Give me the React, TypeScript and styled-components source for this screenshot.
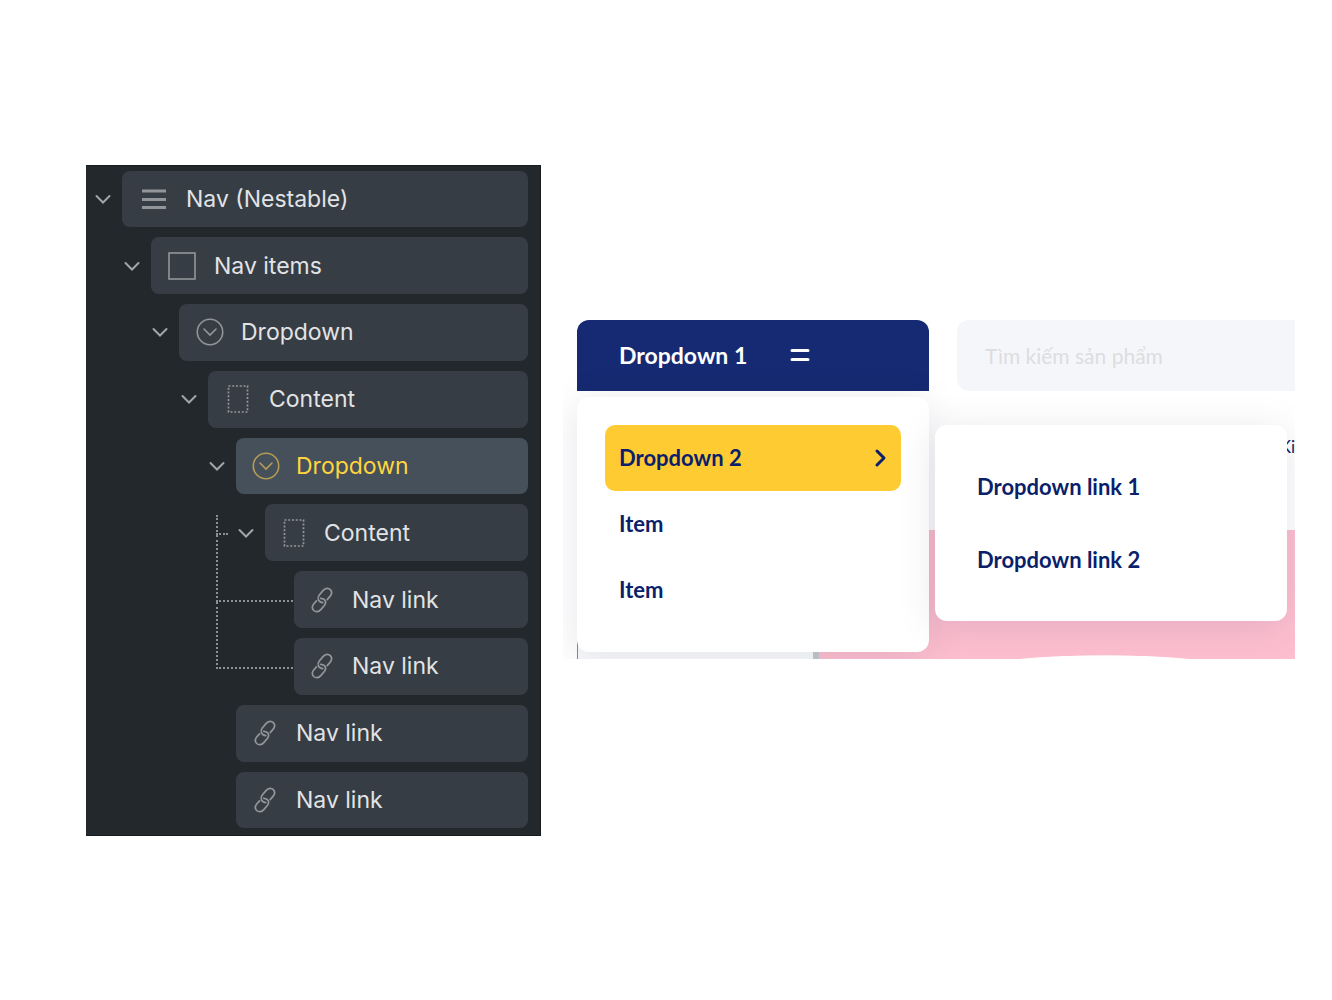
import React from "react";
import styled, { createGlobalStyle } from "styled-components";

const GlobalStyle = createGlobalStyle`
  *, *::before, *::after { box-sizing: border-box; }
  body { margin: 0; background: #fff; }
  button, input { font: inherit; color: inherit; }
`;

const Page = styled.main`
  min-height: 100vh;
  display: flex;
  align-items: center;
  padding: 0 37px 0 86px;
`;

const Columns = styled.div`
  flex: 1;
  display: grid;
  grid-template-columns: minmax(0, 455fr) minmax(0, 732fr);
  column-gap: 22px;
  align-items: start;
`;

/* Structure panel */

const Tree = styled.ul`
  list-style: none;
  margin: 0;
  min-height: 671px;
  padding: 5px 12px 6px 0;
  display: grid;
  grid-auto-rows: 1fr;
  row-gap: 10px;
  background: #23282c;
  border: 1px solid #171c21;
  border-left: 0;
  font-family: Inter, "Liberation Sans", sans-serif;
  font-size: 23px;
`;

const Row = styled.li<{ $depth: number }>`
  position: relative;
  display: grid;
  grid-template-columns: 34px 1fr;
  column-gap: 2px;
  padding-left: ${(p) => Math.round((p.$depth * 143) / 5)}px;
`;

const Toggle = styled.button`
  border: 0;
  padding: 0;
  background: none;
  color: #a3a6a9;
  display: grid;
  place-items: center;
  cursor: pointer;
`;

const Item = styled.button<{ $depth: number; $active?: boolean }>`
  grid-column: 2;
  display: flex;
  align-items: center;
  gap: ${(p) => 18 - Math.floor(p.$depth / 2)}px;
  border: 0;
  border-radius: 8px;
  padding: 0 0 0 ${(p) => 18 - Math.ceil(p.$depth / 2)}px;
  text-align: left;
  cursor: pointer;
  background: ${(p) => (p.$active ? "#46505a" : "#363d44")};
  color: ${(p) => (p.$active ? "#ffd53f" : "#e2e3e5")};
`;

const IconBox = styled.span<{ $active?: boolean }>`
  display: flex;
  flex: none;
  color: ${(p) => (p.$active ? "#b39c53" : "#92969a")};
`;

const Branch = styled.span<{ $short?: boolean }>`
  position: absolute;
  left: 130px;
  bottom: calc(50% - 2px);
  width: ${(p) => (p.$short ? 12 : 77)}px;
  height: ${(p) => (p.$short ? 20 : 67)}px;
  border: dotted #8d9194;
  border-width: 0 0 2px 2px;
`;

type Kind = "menu" | "box" | "dropdown" | "content" | "link";

const Icon = ({ kind }: { kind: Kind }) => (
  <svg width="28" height="28" viewBox="0 0 28 28" fill="none" stroke="currentColor" aria-hidden="true">
    {kind === "menu" && <path d="M2 6h24M2 14.500h24M2 22.500h24" strokeWidth="3" />}
    {kind === "box" && <rect x="1" y="1" width="26" height="26" strokeWidth="1.600" />}
    {kind === "dropdown" && (
      <>
        <circle cx="14" cy="14" r="12.700" strokeWidth="1.600" />
        <path d="M8 11l6 6 6-6" strokeWidth="1.600" strokeLinecap="round" />
      </>
    )}
    {kind === "content" && (
      <rect x="4.500" y="1" width="19" height="26" strokeWidth="1.700" strokeDasharray="2 1.750" />
    )}
    {kind === "link" && (
      <g strokeWidth="1.700" strokeLinecap="round">
        <path d="M13.800 16.600C9.400 16.400 7.700 12.200 10.300 9L14.200 4.400C16.500 1.800 19.500 1.800 21.300 3.700C23.100 5.600 22.900 8.200 21 10.400L18.200 13.600" />
        <path d="M11.600 12.300C16 12.100 18 16 15.500 19.200L11.800 23.600C9.500 26.200 6.500 26.200 4.700 24.500C2.900 22.700 3 20 4.900 17.800L7.500 14.900" />
      </g>
    )}
  </svg>
);

const rows: { label: string; kind: Kind; depth: number; active?: boolean; branch?: "short" | "long" }[] = [
  { label: "Nav (Nestable)", kind: "menu", depth: 0 },
  { label: "Nav items", kind: "box", depth: 1 },
  { label: "Dropdown", kind: "dropdown", depth: 2 },
  { label: "Content", kind: "content", depth: 3 },
  { label: "Dropdown", kind: "dropdown", depth: 4, active: true },
  { label: "Content", kind: "content", depth: 5, branch: "short" },
  { label: "Nav link", kind: "link", depth: 6, branch: "long" },
  { label: "Nav link", kind: "link", depth: 6, branch: "long" },
  { label: "Nav link", kind: "link", depth: 4 },
  { label: "Nav link", kind: "link", depth: 4 },
];

/* Site preview */

const Preview = styled.section`
  margin-top: 155px;
  overflow: hidden;
  color: #0b1f6b;
  font-family: Lato, "Noto Sans", sans-serif;
  font-size: 22px;
  font-weight: 700;
`;

const Header = styled.header`
  display: grid;
  grid-template-columns: 352px 1fr;
  column-gap: 28px;
  padding-left: 14px;
`;

const MenuButton = styled.button`
  height: 71px;
  display: flex;
  align-items: center;
  gap: 43px;
  padding: 0 42px;
  border: 0;
  border-radius: 12px 12px 0 0;
  background: #152a72;
  color: #fff;
  font-size: 23px;
  cursor: pointer;
`;

const Search = styled.input`
  min-width: 0;
  height: 71px;
  padding: 0 28px;
  border: 0;
  border-radius: 12px 0 0 12px;
  background: #f5f6fa;
  font-size: 21px;
  font-weight: 400;
  &::placeholder { color: #dcdddf; opacity: 1; }
`;

const Body = styled.div`
  position: relative;
`;

const TopLinks = styled.nav`
  height: 139px;
  padding-top: 44px;
  display: flex;
  justify-content: flex-end;
  font-size: 17px;
  font-weight: 400;
  line-height: 24px;
`;

const PlainLink = styled.a`
  color: inherit;
  text-decoration: none;
`;

const Hero = styled.div`
  display: grid;
  grid-template-columns: 250px 1fr;
  height: 129px;
`;

const HeroSide = styled.div`
  margin-left: 14px;
  border-left: 1px solid #a08a50;
  background: #f9fafb;
`;

const HeroImage = styled.div`
  overflow: hidden;
  border-left: 6px solid #c3c8cc;
  background: radial-gradient(ellipse 120px 12px at 60% 137px, #fff 94%, transparent 100%), #fdbfd0;
`;

const Panel = styled.ul<{ $sub?: boolean }>`
  position: absolute;
  top: ${(p) => (p.$sub ? 34 : 6)}px;
  left: ${(p) => (p.$sub ? 372 : 14)}px;
  width: 352px;
  list-style: none;
  margin: 0;
  padding: ${(p) => (p.$sub ? "25px 28px" : "28px 28px 29px")};
  display: grid;
  grid-auto-rows: ${(p) => (p.$sub ? 73 : 66)}px;
  border-radius: 12px;
  background: #fff;
  box-shadow: 0 6px 40px rgba(11, 20, 60, 0.1);
`;

const MenuLink = styled.a<{ $active?: boolean }>`
  height: 100%;
  display: flex;
  align-items: center;
  justify-content: space-between;
  padding: 0 14px;
  border-radius: 10px;
  color: inherit;
  text-decoration: none;
  background: ${(p) => (p.$active ? "#ffcb33" : "transparent")};
`;

export default function App() {
  return (
    <>
      <GlobalStyle />
      <Page>
        <Columns>
          <Tree>
            {rows.map((row, i) => (
              <Row key={i} $depth={row.depth}>
                {row.branch && <Branch $short={row.branch === "short"} />}
                {row.kind !== "link" && (
                  <Toggle aria-label={`Collapse ${row.label}`}>
                    <svg width="18" height="18" viewBox="0 0 18 18" fill="none" stroke="currentColor" strokeWidth="2" strokeLinecap="round">
                      <path d="M2.500 6l6.500 6.500L15.500 6" />
                    </svg>
                  </Toggle>
                )}
                <Item $depth={row.depth} $active={row.active}>
                  <IconBox $active={row.active}>
                    <Icon kind={row.kind} />
                  </IconBox>
                  {row.label}
                </Item>
              </Row>
            ))}
          </Tree>
          <Preview>
            <Header>
              <MenuButton>
                Dropdown 1
                <svg width="20" height="14" viewBox="0 0 20 14" stroke="currentColor" strokeWidth="3" strokeLinecap="round" aria-hidden="true">
                  <path d="M2 2.500h16M2 11.500h16" />
                </svg>
              </MenuButton>
              <Search type="search" aria-label="Tìm kiếm sản phẩm" placeholder="Tìm kiếm sản phẩm" />
            </Header>
            <Body>
              <TopLinks>
                <PlainLink href="#">Ki</PlainLink>
              </TopLinks>
              <Hero>
                <HeroSide />
                <HeroImage />
              </Hero>
              <Panel>
                <li>
                  <MenuLink href="#" $active>
                    Dropdown 2
                    <svg width="13" height="20" viewBox="0 0 13 20" fill="none" stroke="currentColor" strokeWidth="3" strokeLinecap="round" strokeLinejoin="round" aria-hidden="true">
                      <path d="M3 3l7 7-7 7" />
                    </svg>
                  </MenuLink>
                </li>
                <li><MenuLink href="#">Item</MenuLink></li>
                <li><MenuLink href="#">Item</MenuLink></li>
              </Panel>
              <Panel $sub>
                <li><MenuLink href="#">Dropdown link 1</MenuLink></li>
                <li><MenuLink href="#">Dropdown link 2</MenuLink></li>
              </Panel>
            </Body>
          </Preview>
        </Columns>
      </Page>
    </>
  );
}
